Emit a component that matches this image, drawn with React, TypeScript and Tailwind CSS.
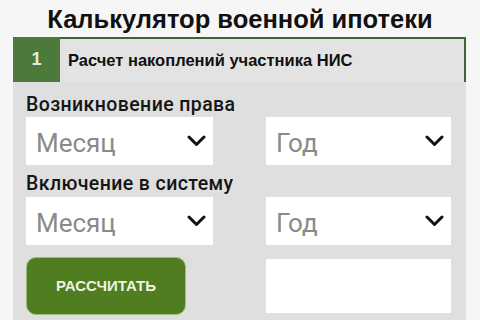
import React from "react";

const Chevron: React.FC = () => (
  <svg width="19" height="12" viewBox="0 0 19 12" fill="none">
    <path d="M2 2l7.5 7.5L17 2" stroke="#111" strokeWidth="3" strokeLinecap="round" strokeLinejoin="round" />
  </svg>
);

const SelectBox: React.FC<{ placeholder: string }> = ({ placeholder }) => (
  <div className="h-[48px] bg-white flex items-center justify-between pl-[10px] pr-[7px]">
    <span className="font-['Roboto',sans-serif] text-[26px] leading-none text-[#8a8a8a] pt-[3px]">{placeholder}</span>
    <Chevron />
  </div>
);

const Label: React.FC<{ children: React.ReactNode; className?: string }> = ({ children, className = "" }) => (
  <div className={"font-['Roboto',sans-serif] font-medium text-[19.5px] leading-[22px] tracking-[0.4px] text-[#151515] " + className}>
    {children}
  </div>
);

const App: React.FC = () => {
  return (
    <div className="w-[480px] h-[320px] bg-[#f6f6f6] overflow-hidden flex flex-col font-['Liberation_Sans',Arial,sans-serif] text-[#111]">
      <h1 className="h-[37px] shrink-0 text-center text-[25.5px] font-bold leading-[38px]">
        Калькулятор военной ипотеки
      </h1>

      <div className="ml-[13px] w-[453px] flex-1 bg-[#dfdfdf]">
        <div className="h-[45px] flex bg-[#e3e3e3] border-t-2 border-r-2 border-[#3e6633]">
          <div className="w-[47px] -mt-[2px] h-[45px] bg-[#4b7a3a] flex items-center justify-center text-[18px] font-bold text-[#e4ecd8]">
            1
          </div>
          <div className="pl-[8px] flex items-center text-[16.5px] font-bold">
            Расчет накоплений участника НИС
          </div>
        </div>

        <div className="pl-[13px] pr-[15px] pt-[12px]">
          <Label>Возникновение права</Label>
          <div className="mt-[1px] grid grid-cols-[187px_185px] gap-x-[53px]">
            <SelectBox placeholder="Месяц" />
            <SelectBox placeholder="Год" />
          </div>

          <Label className="mt-[8px]">Включение в систему</Label>
          <div className="mt-[2px] grid grid-cols-[187px_185px] gap-x-[53px]">
            <SelectBox placeholder="Месяц" />
            <SelectBox placeholder="Год" />
          </div>

          <div className="mt-[12px] grid grid-cols-[160px_185px] gap-x-[80px] items-start">
            <button className="h-[58px] rounded-[10px] bg-[#4f7d1f] border border-[#9dbb7c] text-[15px] font-bold text-[#eef3e2]">
              РАССЧИТАТЬ
            </button>
            <div className="mt-[2px] h-[54px] bg-white" />
          </div>
        </div>
      </div>
    </div>
  );
};

export default App;
